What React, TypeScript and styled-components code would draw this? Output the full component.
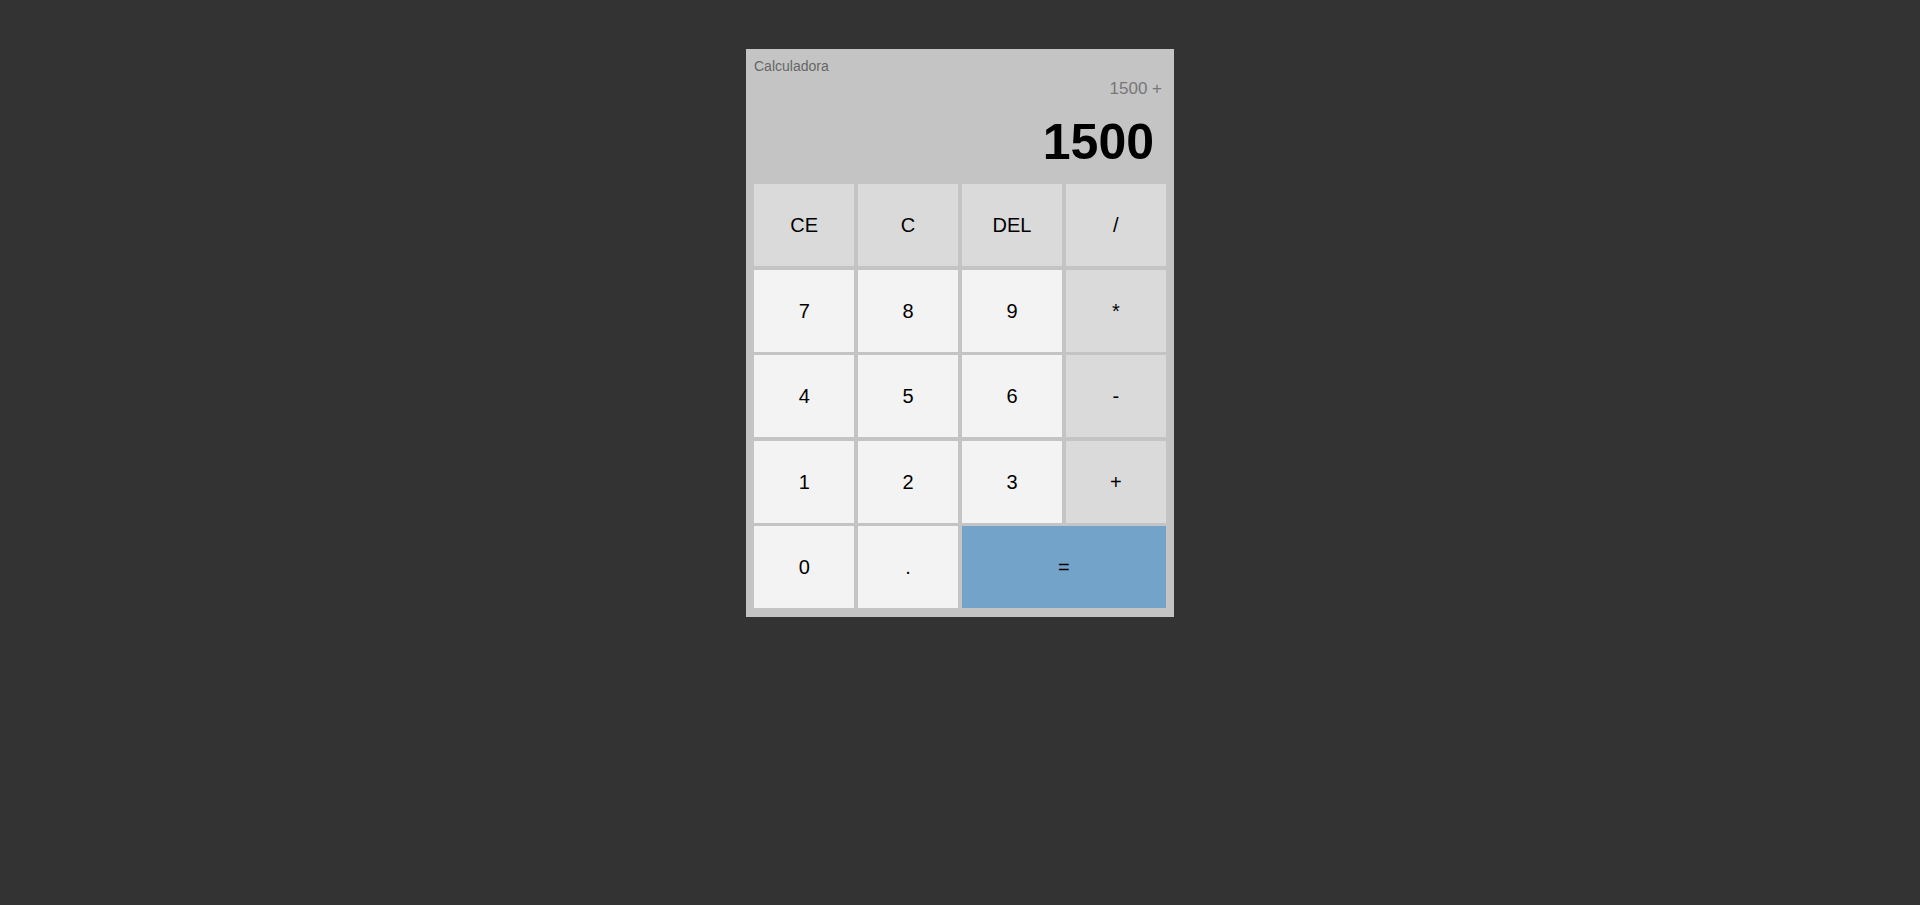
import React from "react";
import styled, { createGlobalStyle } from "styled-components";

const GlobalStyle = createGlobalStyle`
  html, body {
    margin: 0;
    padding: 0;
    background: #333333;
    font-family: "Liberation Sans", Arial, sans-serif;
  }
`;

const Page = styled.div`
  min-height: 905px;
  display: flex;
  justify-content: center;
  align-items: flex-start;
  padding-top: 49px;
  box-sizing: border-box;
`;

const Calculator = styled.div`
  width: 428px;
  box-sizing: border-box;
  background: #c4c4c4;
  padding: 8px 8px 9px 8px;
  display: flex;
  flex-direction: column;
`;

const Title = styled.div`
  font-size: 14px;
  line-height: 16px;
  color: #666666;
  margin-top: 1px;
`;

const History = styled.div`
  font-size: 17px;
  line-height: 20px;
  color: #777777;
  text-align: right;
  padding-right: 4px;
  margin-top: 5px;
`;

const Current = styled.div`
  font-size: 50px;
  line-height: 60px;
  font-weight: bold;
  color: #000000;
  text-align: right;
  padding-right: 12px;
  margin-top: 13px;
  margin-bottom: 12px;
`;

const Keypad = styled.div`
  display: grid;
  grid-template-columns: repeat(4, 1fr);
  grid-auto-rows: 82px;
  gap: 3.5px;
`;

type Variant = "func" | "digit" | "op" | "equals";

const bg: Record<Variant, string> = {
  func: "#dadada",
  digit: "#f3f3f3",
  op: "#dadada",
  equals: "#74a3ca",
};

const Key = styled.button<{ $variant: Variant; $span?: number }>`
  border: none;
  margin: 0;
  padding: 1px 0 0 0;
  background: ${(p) => bg[p.$variant]};
  grid-column: span ${(p) => p.$span ?? 1};
  font-family: "Liberation Sans", Arial, sans-serif;
  font-size: 20px;
  color: #000000;
  display: flex;
  align-items: center;
  justify-content: center;
  cursor: pointer;
`;

const keys: { label: string; variant: Variant; span?: number }[] = [
  { label: "CE", variant: "func" },
  { label: "C", variant: "func" },
  { label: "DEL", variant: "func" },
  { label: "/", variant: "op" },
  { label: "7", variant: "digit" },
  { label: "8", variant: "digit" },
  { label: "9", variant: "digit" },
  { label: "*", variant: "op" },
  { label: "4", variant: "digit" },
  { label: "5", variant: "digit" },
  { label: "6", variant: "digit" },
  { label: "-", variant: "op" },
  { label: "1", variant: "digit" },
  { label: "2", variant: "digit" },
  { label: "3", variant: "digit" },
  { label: "+", variant: "op" },
  { label: "0", variant: "digit" },
  { label: ".", variant: "digit" },
  { label: "=", variant: "equals", span: 2 },
];

export default function App() {
  return (
    <>
      <GlobalStyle />
      <Page>
        <Calculator>
          <Title>Calculadora</Title>
          <History>1500 +</History>
          <Current>1500</Current>
          <Keypad>
            {keys.map((k) => (
              <Key key={k.label} $variant={k.variant} $span={k.span}>
                {k.label}
              </Key>
            ))}
          </Keypad>
        </Calculator>
      </Page>
    </>
  );
}
